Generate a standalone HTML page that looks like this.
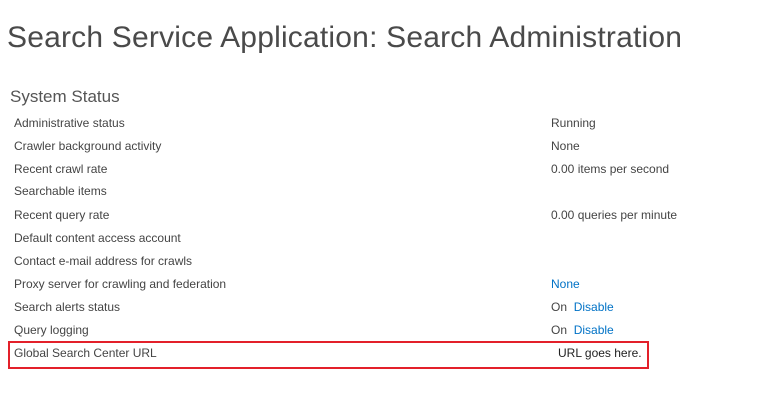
<!DOCTYPE html>
<html><head><style>
body{margin:0;width:768px;height:401px;background:#fff;font-family:"Liberation Sans",sans-serif;color:#444;position:relative;overflow:hidden}
.t{position:absolute;left:7px;top:21px;font-size:30px;color:#4a4a4a;white-space:nowrap;letter-spacing:0.2px}
.h{position:absolute;left:10px;top:87px;font-size:17px;color:#555}
.r{position:absolute;left:14px;font-size:12px;color:#444;white-space:nowrap}
.v{position:absolute;left:551px;font-size:12px;color:#444;white-space:nowrap}
a{color:#0072c6;text-decoration:none}
.box{position:absolute;left:8px;top:341px;width:637px;height:24px;border:2px solid #e3202a}
</style></head><body>
<div class="t">Search Service Application: Search Administration</div>
<div class="h">System Status</div>
<div class="r" style="top:116px">Administrative status</div><div class="v" style="top:116px">Running</div>
<div class="r" style="top:139px">Crawler background activity</div><div class="v" style="top:139px">None</div>
<div class="r" style="top:162px">Recent crawl rate</div><div class="v" style="top:162px">0.00 items per second</div>
<div class="r" style="top:184px">Searchable items</div>
<div class="r" style="top:208px">Recent query rate</div><div class="v" style="top:208px">0.00 queries per minute</div>
<div class="r" style="top:231px">Default content access account</div>
<div class="r" style="top:254px">Contact e-mail address for crawls</div>
<div class="r" style="top:277px">Proxy server for crawling and federation</div><div class="v" style="top:277px"><a>None</a></div>
<div class="r" style="top:300px">Search alerts status</div><div class="v" style="top:300px">On&nbsp; <a>Disable</a></div>
<div class="r" style="top:323px">Query logging</div><div class="v" style="top:323px">On&nbsp; <a>Disable</a></div>
<div class="box"></div>
<div class="r" style="top:346px">Global Search Center URL</div>
<div class="v" style="top:346px;left:558px;color:#222">URL goes here.</div>
</body></html>
